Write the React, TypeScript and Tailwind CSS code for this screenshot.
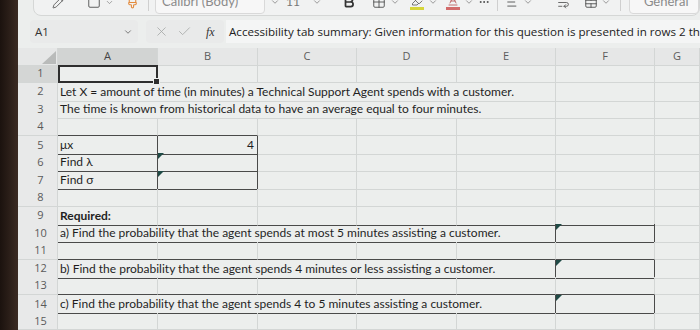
import React from 'react';
import { ChevronDown, X, Check, Bold, AlignLeft, WrapText, TableCellsMerge, Grid2x2, Highlighter, Baseline, MoreHorizontal, PaintbrushVertical, Square, Pencil } from 'lucide-react';

const COLS = ['A', 'B', 'C', 'D', 'E', 'F', 'G'];
const GRID = 'grid grid-cols-[40px_100px_100px_99px_100px_99px_99px_1fr]';

// light gridline
const line = 'border-[#d3d6d5]';

type Cell = {
  text?: React.ReactNode;
  span?: number;
  bottomDark?: boolean;
  rightDark?: boolean;
  flag?: boolean;
  right?: boolean;
  bold?: boolean;
  selected?: boolean;
};

const blank = (n: number, extra: Partial<Cell> = {}): Cell[] => Array.from({ length: n }, () => ({ ...extra }));

const question = (text: string): Cell[] => [
  { text, span: 5, bottomDark: true, rightDark: true },
  { flag: true, bottomDark: true, rightDark: true },
  {},
];

const ROWS: Cell[][] = [
  [{ selected: true }, ...blank(6)],
  [{ text: 'Let X = amount of time (in minutes) a Technical Support Agent spends with a customer.', span: 5 }, ...blank(2)],
  [{ text: 'The time is known from historical data to have an average equal to four minutes.', span: 5 }, ...blank(2)],
  [{ bottomDark: true }, { bottomDark: true }, ...blank(5)],
  [{ text: 'μx', bottomDark: true, rightDark: true }, { text: '4', right: true, bottomDark: true, rightDark: true }, ...blank(5)],
  [{ text: 'Find λ', bottomDark: true, rightDark: true }, { flag: true, bottomDark: true, rightDark: true }, ...blank(5)],
  [{ text: 'Find σ', bottomDark: true, rightDark: true }, { flag: true, bottomDark: true, rightDark: true }, ...blank(5)],
  blank(7),
  [{ text: 'Required:', bold: true, bottomDark: true }, ...blank(5, { bottomDark: true }), {}],
  question('a) Find the probability that the agent spends at most 5 minutes assisting a customer.'),
  [...blank(6, { bottomDark: true }), {}],
  question('b) Find the probability that the agent spends 4 minutes or less assisting a customer.'),
  [...blank(6, { bottomDark: true }), {}],
  question('c) Find the probability that the agent spends 4 to 5 minutes assisting a customer.'),
  blank(7),
];

const spanClass: Record<number, string> = { 1: 'col-span-1', 5: 'col-span-5' };

function GridCell({ cell }: { cell: Cell }) {
  return (
    <div
      className={`relative flex items-center min-w-0 whitespace-nowrap px-[2px] border-b border-r ${spanClass[cell.span ?? 1]} ${
        cell.bottomDark ? 'border-b-[#4a4a4a]' : 'border-b-[#d3d6d5]'
      } ${cell.rightDark ? 'border-r-[#4a4a4a]' : 'border-r-[#d3d6d5]'} ${cell.right ? 'justify-end pr-[3px]' : ''} ${
        cell.bold ? 'font-bold' : ''
      } ${cell.selected ? 'outline-2 -outline-offset-2 outline-[#2e2e2e]' : ''}`}
    >
      {cell.text}
      {cell.flag && (
        <div className="absolute top-0 left-0 w-0 h-0 border-t-[6px] border-r-[6px] border-t-[#1f4a46] border-r-transparent" />
      )}
      {cell.selected && (
        <div className="absolute -right-[3px] -bottom-[3px] w-[5px] h-[5px] bg-[#2e2e2e] border border-[#eef0ef] box-content z-10" />
      )}
    </div>
  );
}

function Toolbar() {
  return (
    <div className="h-[17px] overflow-hidden shrink-0">
      <div className="-mt-[12px] ml-[15px] h-[28px] flex items-center bg-[#f1f2f2] border border-[#d5d7d6] rounded-b-lg text-[#4b4b4b]">
        <div className="w-[18px]" />
        <Pencil size={13} strokeWidth={1.5} />
        <div className="w-[22px]" />
        <Square size={14} strokeWidth={1.5} />
        <ChevronDown size={9} className="ml-[4px] text-[#888]" />
        <div className="w-[12px]" />
        <PaintbrushVertical size={13} className="text-[#e38a3c]" />
        <div className="w-[10px] h-[18px] border-r border-[#cfcfcf] mr-[6px]" />
        <div className="w-[110px] h-[24px] flex items-center px-[6px] bg-[#f7f7f7] border border-[#d9d9d9] rounded text-[13px] text-[#8a8a8a]">
          Calibri (Body)
        </div>
        <ChevronDown size={10} className="ml-[5px] text-[#888]" />
        <span className="ml-[6px] text-[12px] text-[#777]">11</span>
        <ChevronDown size={10} className="ml-[12px] text-[#888]" />
        <Bold size={14} strokeWidth={3} className="ml-[20px] text-[#333]" />
        <Grid2x2 size={14} strokeWidth={1.5} className="ml-[16px]" />
        <ChevronDown size={10} className="ml-[4px] text-[#888]" />
        <div className="ml-[10px] flex flex-col items-center">
          <Highlighter size={12} strokeWidth={1.5} />
          <div className="w-[14px] h-[3px] bg-[#d6d63a]" />
        </div>
        <ChevronDown size={10} className="ml-[4px] text-[#888]" />
        <div className="ml-[8px] flex flex-col items-center">
          <Baseline size={12} strokeWidth={1.5} className="text-[#b04040]" />
          <div className="w-[14px] h-[3px] bg-[#d26a6a]" />
        </div>
        <ChevronDown size={10} className="ml-[4px] text-[#888]" />
        <MoreHorizontal size={12} className="ml-[4px]" />
        <div className="w-[8px] h-[18px] border-r border-[#cfcfcf] mr-[8px]" />
        <AlignLeft size={14} strokeWidth={1.5} />
        <ChevronDown size={10} className="ml-[3px] text-[#888]" />
        <WrapText size={13} strokeWidth={1.5} className="ml-[24px]" />
        <TableCellsMerge size={14} strokeWidth={1.5} className="ml-[14px]" />
        <ChevronDown size={10} className="ml-[3px] text-[#888]" />
        <div className="w-[10px] h-[18px] border-r border-[#cfcfcf] mr-[8px]" />
        <div className="flex-1 h-[24px] flex items-center pl-[14px] bg-[#f7f7f7] border border-[#d9d9d9] rounded text-[13px] text-[#8a8a8a]">
          General
        </div>
      </div>
    </div>
  );
}

function FormulaBar() {
  return (
    <div className="mt-[3px] h-[23px] flex items-stretch gap-[8px] shrink-0 font-['Open_Sans',sans-serif]">
      <div className="ml-[12px] w-[108px] flex items-center justify-between px-[5px] bg-[#e9eaea] rounded text-[11.5px] text-[#333]">
        <span>A1</span>
        <ChevronDown size={10} className="text-[#666]" />
      </div>
      <div className="w-[78px] flex items-center gap-[8px] pl-[8px] bg-[#e9eaea] rounded text-[#a5a7a6]">
        <X size={15} strokeWidth={1.3} />
        <Check size={15} strokeWidth={1.3} />
        <span className="ml-[6px] text-[12px] italic text-[#333] font-['Liberation_Serif',serif]">fx</span>
      </div>
      <div className="flex-1 min-w-0 -ml-[6px] flex items-center pl-[3px] bg-[#f4f5f5] text-[11.6px] text-[#222] whitespace-nowrap overflow-hidden">
        Accessibility tab summary: Given information for this question is presented in rows 2 through 15.
      </div>
    </div>
  );
}

export default function App() {
  return (
    <div className="flex w-[700px] h-[330px] overflow-hidden bg-[#241813]">
      <div className="w-[18px] shrink-0 bg-gradient-to-r from-[#1b120e] to-[#3b2b23]" />
      <div className="flex-1 min-w-0 flex flex-col bg-[#eceeed] font-['Lato',sans-serif]">
        <Toolbar />
        <FormulaBar />
        <div className="h-[5px] shrink-0" />
        {/* column headings */}
        <div className={`${GRID} h-[17px] shrink-0 text-[11px] text-[#5c5c5c] font-['Open_Sans',sans-serif]`}>
          <div className={`relative border-r border-b ${line} bg-[#e6e7e7]`}>
            <svg className="absolute right-[1px] bottom-[1px]" width="14" height="13" viewBox="0 0 14 13">
              <polygon points="14,0 14,13 0,13" fill="#b9bbba" />
            </svg>
          </div>
          {COLS.map((c) => (
            <div
              key={c}
              className={`flex items-center justify-center border-r border-b ${line} ${
                c === 'A' ? 'bg-[#d2d4d3] border-b-[#9a9a9a] text-[#444]' : 'bg-[#e6e7e7]'
              }`}
            >
              {c}
            </div>
          ))}
        </div>
        {ROWS.map((row, i) => (
          <div key={i} className={`${GRID} h-[17.7px] shrink-0 text-[12px] text-[#1f1f1f]`}>
            <div
              className={`flex items-center justify-center pl-[6px] border-r border-b ${line} text-[11px] text-[#5a5a5a] font-['Open_Sans',sans-serif] ${
                i === 0 ? 'bg-[#d4d6d5]' : 'bg-[#e8e9e9]'
              }`}
            >
              {i + 1}
            </div>
            {row.map((cell, j) => (
              <GridCell key={j} cell={cell} />
            ))}
          </div>
        ))}
      </div>
    </div>
  );
}
